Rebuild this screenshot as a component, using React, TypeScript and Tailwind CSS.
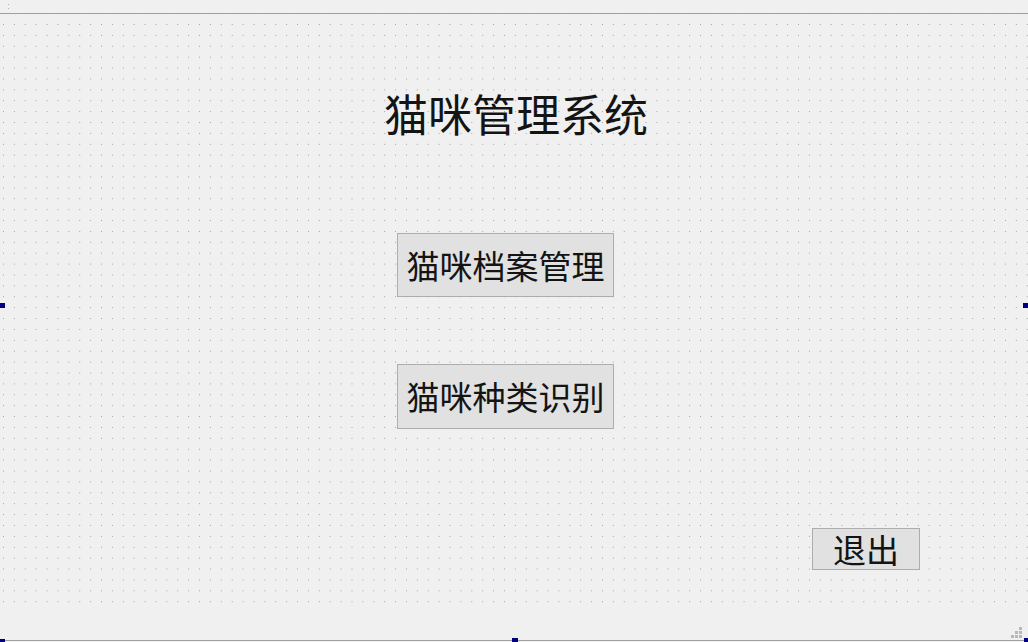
import React from "react";

const font = "font-['Noto_Sans_CJK_SC','Noto_Sans',sans-serif]";

const FormButton: React.FC<{ label: string; className: string }> = ({ label, className }) => (
  <button
    type="button"
    className={`flex items-center justify-center bg-[#e1e1e1] border border-[#adadad] text-[33px] leading-none text-[#141414] ${className}`}
  >
    {label}
  </button>
);

const App: React.FC = () => {
  return (
    <div className={`relative w-[1028px] h-[642px] bg-[#f0f0f0] overflow-hidden flex flex-col ${font}`}>
      {/* menu bar strip */}
      <div className="h-[14px] shrink-0 border-b border-[#a0a0a0] flex flex-col gap-[3px] pl-[8px] pt-[4px]">
        <span className="w-[1px] h-[1px] bg-[#b0b0b0]" />
        <span className="w-[1px] h-[1px] bg-[#b0b0b0]" />
      </div>

      {/* central widget with designer grid */}
      <div className="h-[593px] shrink-0 flex flex-col bg-[radial-gradient(circle_at_0.5px_0.5px,#a2a2a2_0.7px,transparent_0.9px)] bg-[size:10.9px_10.9px] bg-[position:3px_10px]">
        <div className="mt-[77px] h-[44px] flex justify-center pl-[4px]">
          <h1 className="text-[44px] leading-none font-normal text-[#141414]">猫咪管理系统</h1>
        </div>
        <FormButton label="猫咪档案管理" className="mt-[98px] ml-[397px] w-[217px] h-[64px]" />
        <FormButton label="猫咪种类识别" className="mt-[67px] ml-[397px] w-[217px] h-[65px]" />
        <FormButton label="退出" className="mt-[99px] ml-[812px] w-[108px] h-[42px]" />
      </div>

      {/* status bar */}
      <div className="flex-1 border-b border-[#a0a0a0]" />
      <div className="h-[1px] shrink-0" />

      {/* size grip */}
      <div className="absolute right-[6px] bottom-[4px] grid grid-cols-3 gap-[1px] w-[11px] h-[11px]">
        <span />
        <span />
        <span className="bg-[#b8b8b8]" />
        <span />
        <span className="bg-[#b8b8b8]" />
        <span className="bg-[#b8b8b8]" />
        <span className="bg-[#b8b8b8]" />
        <span className="bg-[#b8b8b8]" />
        <span className="bg-[#b8b8b8]" />
      </div>

      {/* selection handles */}
      <span className="absolute left-0 top-[303px] w-[5px] h-[5px] bg-[#000080]" />
      <span className="absolute right-0 top-[303px] w-[5px] h-[5px] bg-[#000080]" />
      <span className="absolute left-0 bottom-0 w-[5px] h-[3px] bg-[#000080]" />
      <span className="absolute left-[512px] bottom-0 w-[6px] h-[4px] bg-[#000080]" />
      <span className="absolute right-0 bottom-0 w-[4px] h-[4px] bg-[#000080]" />
    </div>
  );
};

export default App;
